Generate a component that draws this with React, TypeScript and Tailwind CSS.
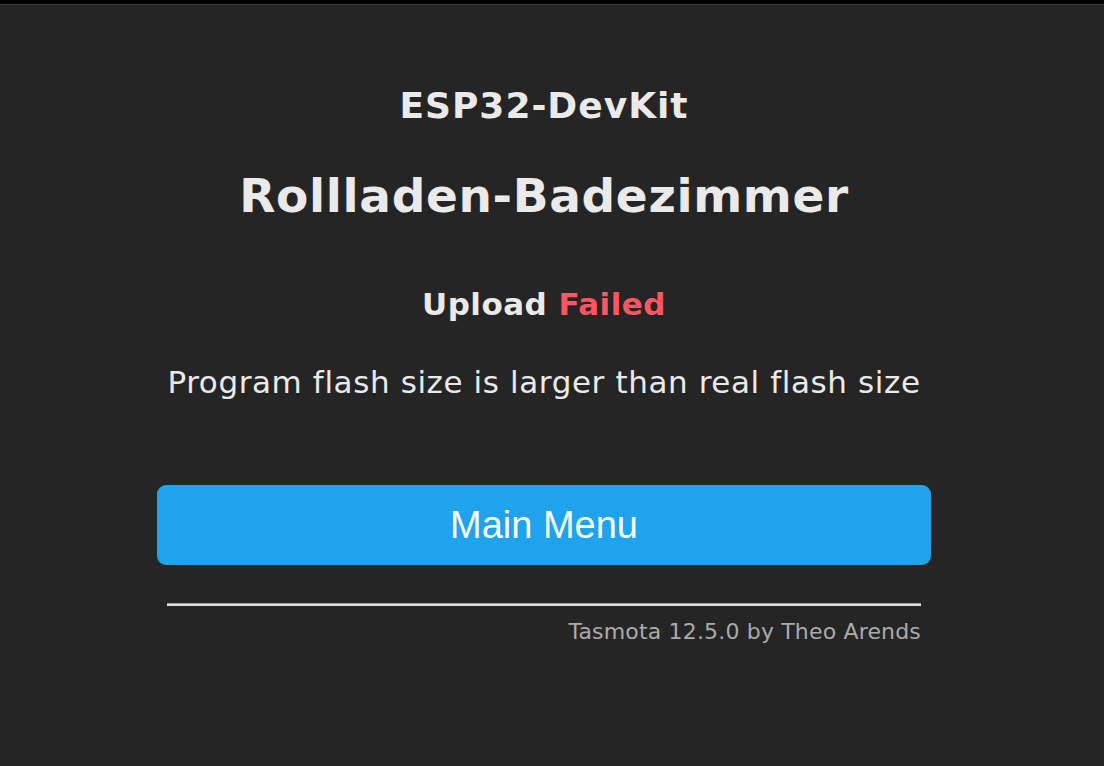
export default function App() {
  return (
    <div className="min-h-[766px] bg-[#252525] text-[#eaeaea] font-['DejaVu_Sans',Verdana,sans-serif]">
      <div className="h-[4px] bg-black" />
      <div className="h-px bg-[#3b3b3b]" />

      <div className="flex justify-center pr-4">
        <div className="flex w-[774px] flex-col items-center">
          <h3 className="mt-[83px] text-[36px] leading-none font-bold tracking-[1px]">ESP32-DevKit</h3>
          <h2 className="mt-[48px] text-[47px] leading-none font-bold tracking-[0.65px]">Rollladen-Badezimmer</h2>

          <div className="mt-[70px] text-[31px] leading-none font-bold tracking-[0.45px]">
            Upload <span className="text-[#ff5661]">Failed</span>
          </div>
          <div className="mt-[47px] text-[31px] leading-none whitespace-nowrap tracking-[0.6px]">
            Program flash size is larger than real flash size
          </div>

          <button className="mt-[87px] flex h-[80px] w-full items-center justify-center rounded-[9px] bg-[#1fa3ec] font-['Liberation_Sans',Arial,sans-serif] text-[38px] text-[#faffff]">
            Main Menu
          </button>

          <div className="mt-[38px] w-full px-[10px]">
            <div className="h-[3px] border-t border-[#9a9a9a] bg-[#dedede]" />
            <div className="mt-[15px] text-right text-[22px] leading-none tracking-[0.17px] text-[#aaaaaa]">
              Tasmota 12.5.0 by Theo Arends
            </div>
          </div>
        </div>
      </div>
    </div>
  )
}
